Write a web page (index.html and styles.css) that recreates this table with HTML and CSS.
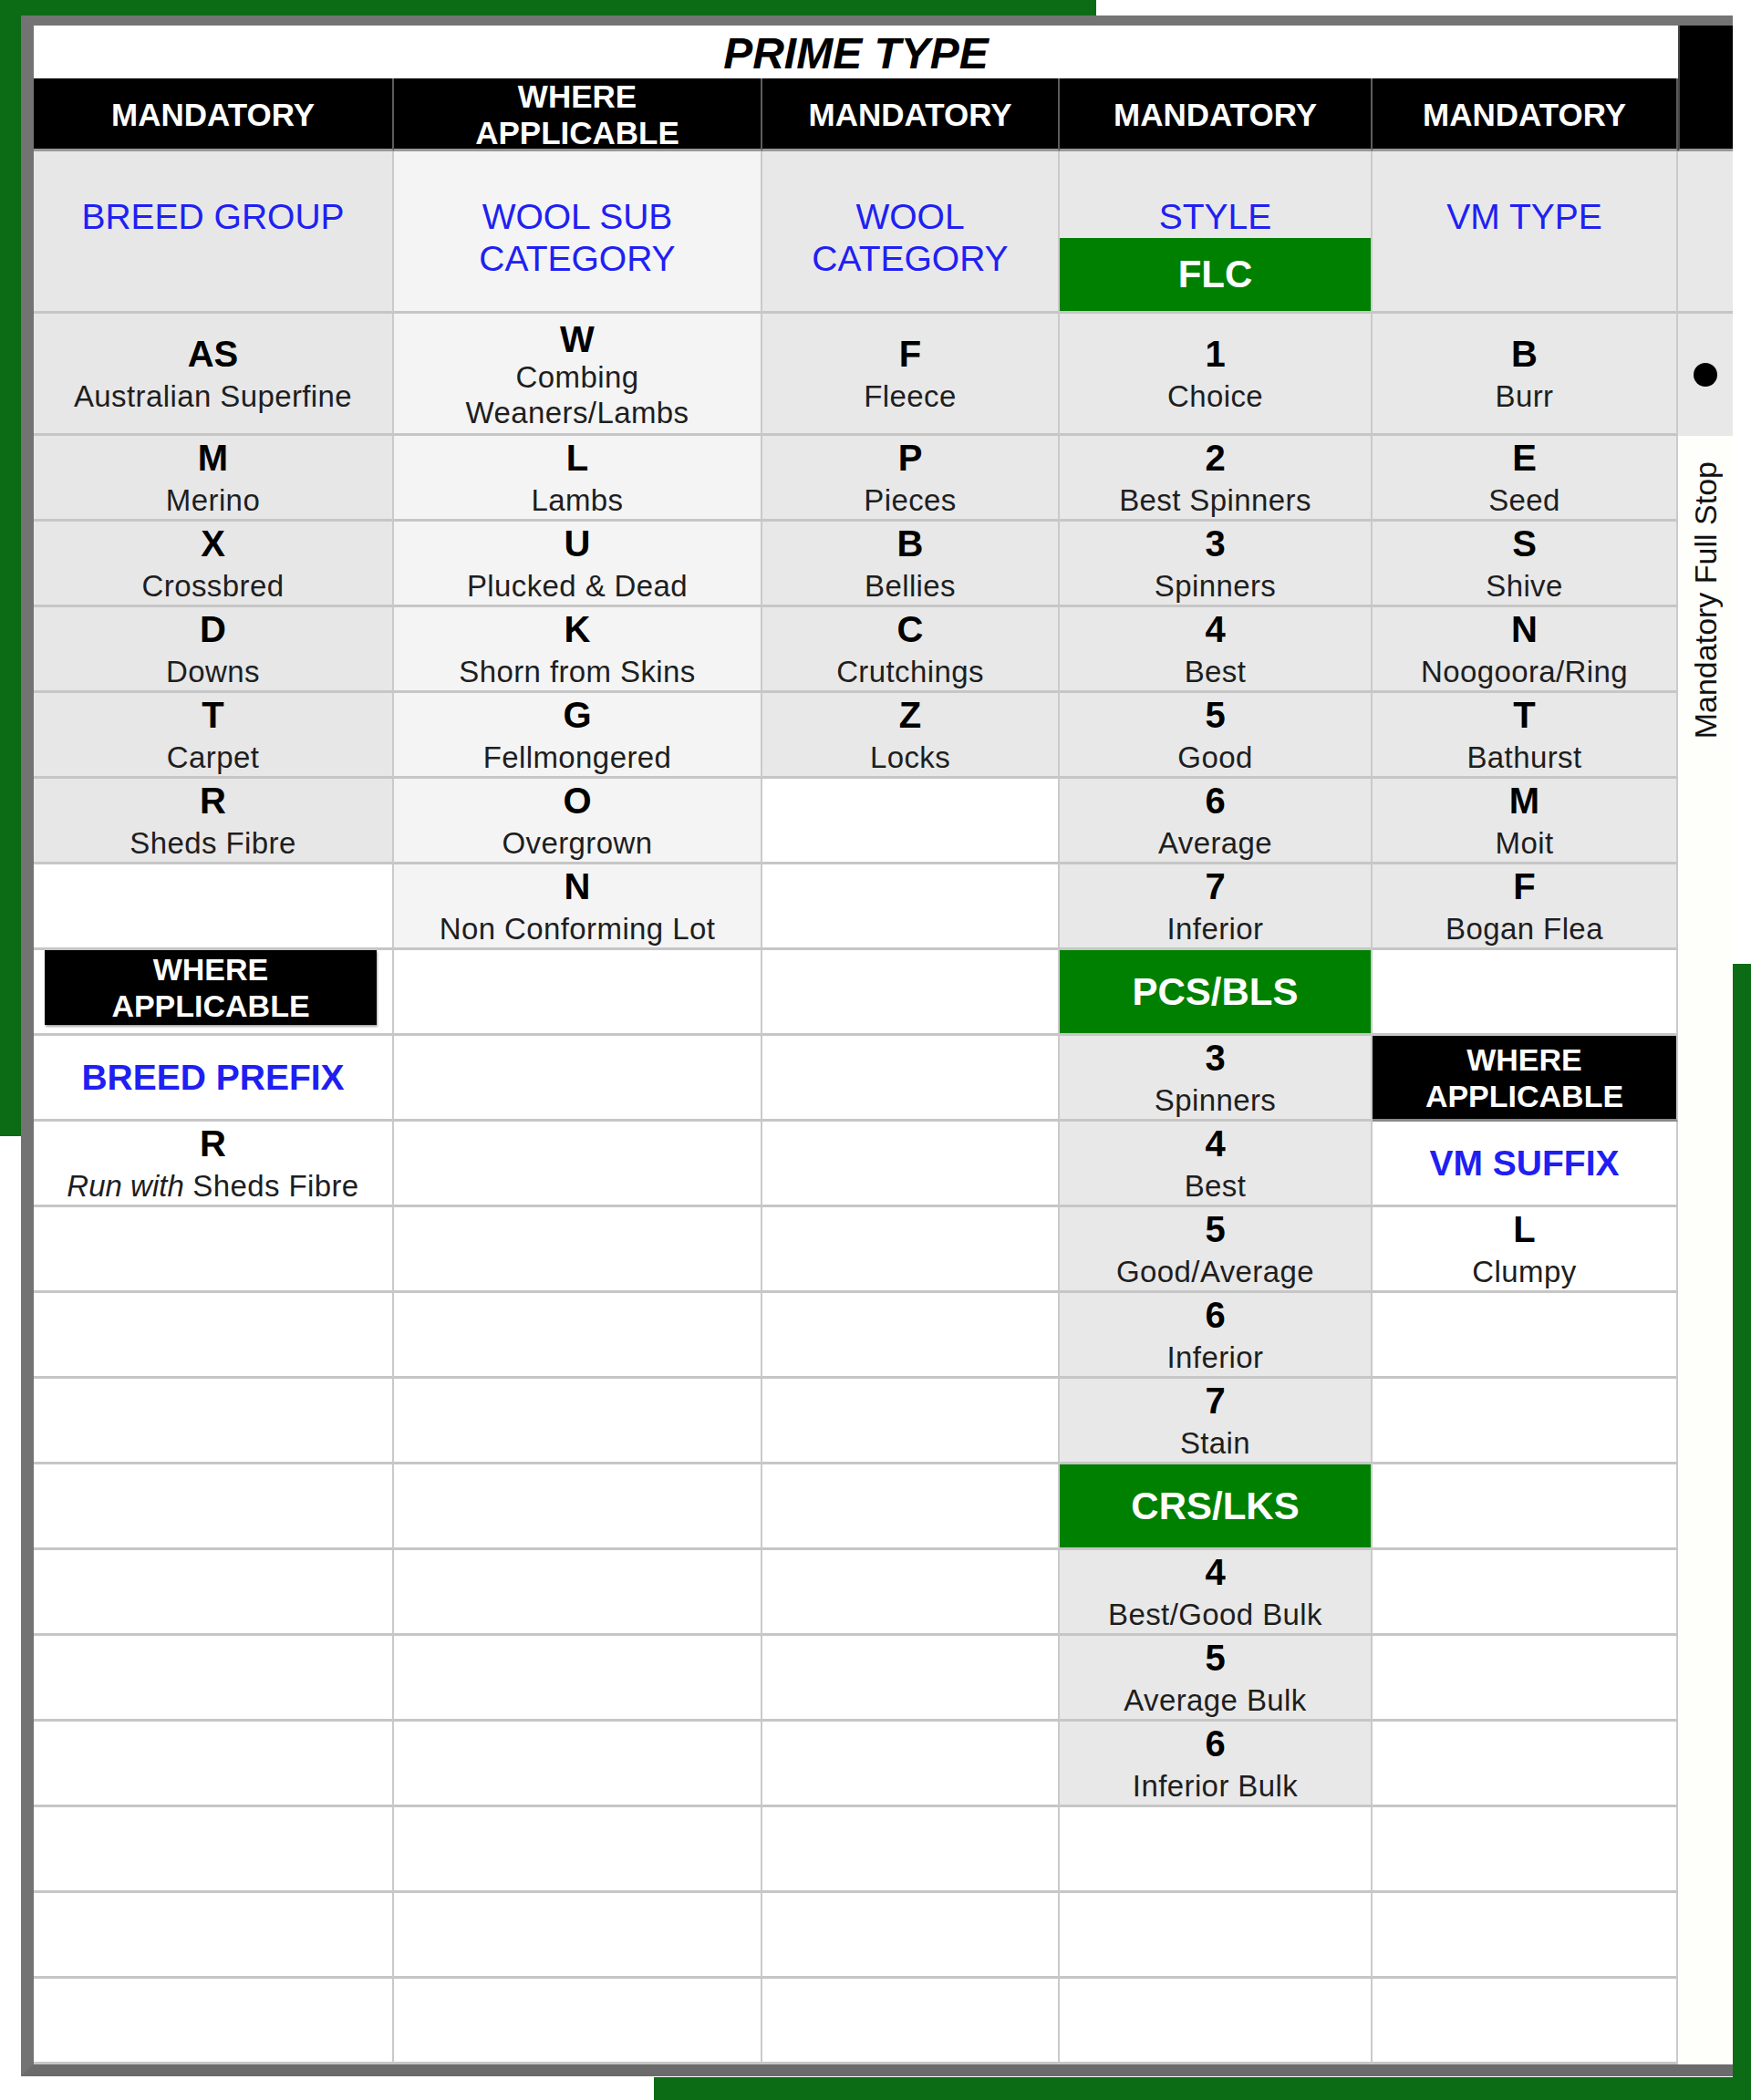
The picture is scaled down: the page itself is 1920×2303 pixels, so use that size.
FILE: index.html
```html
<!DOCTYPE html>
<html>
<head>
<meta charset="utf-8">
<title>Prime Type</title>
<link rel="stylesheet" href="styles.css">
</head>
<body>
<div class="frame">
  <div class="title">PRIME TYPE</div>
  <div class="side-top"></div>

  <div class="hd">MANDATORY</div>
  <div class="hd">WHERE<br>APPLICABLE</div>
  <div class="hd">MANDATORY</div>
  <div class="hd">MANDATORY</div>
  <div class="hd">MANDATORY</div>

  <div class="cat g1">BREED GROUP</div>
  <div class="cat g2">WOOL SUB<br>CATEGORY</div>
  <div class="cat g3">WOOL<br>CATEGORY</div>
  <div class="cat g3 style"><span>STYLE</span><span class="flc">FLC</span></div>
  <div class="cat g3">VM TYPE</div>
  <div class="cat g3 side"></div>

  <!-- row 1 -->
  <div class="cell g1"><b class="code">AS</b><span class="desc">Australian Superfine</span></div>
  <div class="cell g2"><b class="code">W</b><span class="desc tight">Combing<br>Weaners/Lambs</span></div>
  <div class="cell g3"><b class="code">F</b><span class="desc">Fleece</span></div>
  <div class="cell g3"><b class="code">1</b><span class="desc">Choice</span></div>
  <div class="cell g3"><b class="code">B</b><span class="desc">Burr</span></div>
  <div class="dot-cell"><span class="dot"></span></div>

  <div class="stop-cell"><span class="stop">Mandatory Full Stop</span></div>

  <!-- row 2 -->
  <div class="cell g1"><b class="code">M</b><span class="desc">Merino</span></div>
  <div class="cell g2"><b class="code">L</b><span class="desc">Lambs</span></div>
  <div class="cell g3"><b class="code">P</b><span class="desc">Pieces</span></div>
  <div class="cell g3"><b class="code">2</b><span class="desc">Best Spinners</span></div>
  <div class="cell g3"><b class="code">E</b><span class="desc">Seed</span></div>

  <!-- row 3 -->
  <div class="cell g1"><b class="code">X</b><span class="desc">Crossbred</span></div>
  <div class="cell g2"><b class="code">U</b><span class="desc">Plucked &amp; Dead</span></div>
  <div class="cell g3"><b class="code">B</b><span class="desc">Bellies</span></div>
  <div class="cell g3"><b class="code">3</b><span class="desc">Spinners</span></div>
  <div class="cell g3"><b class="code">S</b><span class="desc">Shive</span></div>

  <!-- row 4 -->
  <div class="cell g1"><b class="code">D</b><span class="desc">Downs</span></div>
  <div class="cell g2"><b class="code">K</b><span class="desc">Shorn from Skins</span></div>
  <div class="cell g3"><b class="code">C</b><span class="desc">Crutchings</span></div>
  <div class="cell g3"><b class="code">4</b><span class="desc">Best</span></div>
  <div class="cell g3"><b class="code">N</b><span class="desc">Noogoora/Ring</span></div>

  <!-- row 5 -->
  <div class="cell g1"><b class="code">T</b><span class="desc">Carpet</span></div>
  <div class="cell g2"><b class="code">G</b><span class="desc">Fellmongered</span></div>
  <div class="cell g3"><b class="code">Z</b><span class="desc">Locks</span></div>
  <div class="cell g3"><b class="code">5</b><span class="desc">Good</span></div>
  <div class="cell g3"><b class="code">T</b><span class="desc">Bathurst</span></div>

  <!-- row 6 -->
  <div class="cell g1"><b class="code">R</b><span class="desc">Sheds Fibre</span></div>
  <div class="cell g2"><b class="code">O</b><span class="desc">Overgrown</span></div>
  <div class="cell"></div>
  <div class="cell g3"><b class="code">6</b><span class="desc">Average</span></div>
  <div class="cell g3"><b class="code">M</b><span class="desc">Moit</span></div>

  <!-- row 7 -->
  <div class="cell"></div>
  <div class="cell g2"><b class="code">N</b><span class="desc">Non Conforming Lot</span></div>
  <div class="cell"></div>
  <div class="cell g3"><b class="code">7</b><span class="desc">Inferior</span></div>
  <div class="cell g3"><b class="code">F</b><span class="desc">Bogan Flea</span></div>

  <!-- row 8 -->
  <div class="cell boxed"><span class="wa-box">WHERE<br>APPLICABLE</span></div>
  <div class="cell"></div>
  <div class="cell"></div>
  <div class="cell green">PCS/BLS</div>
  <div class="cell"></div>

  <!-- row 9 -->
  <div class="cell blue-bold">BREED PREFIX</div>
  <div class="cell"></div>
  <div class="cell"></div>
  <div class="cell g3"><b class="code">3</b><span class="desc">Spinners</span></div>
  <div class="cell wa-cell">WHERE<br>APPLICABLE</div>

  <!-- row 10 -->
  <div class="cell"><b class="code">R</b><span class="desc"><i>Run with</i> Sheds Fibre</span></div>
  <div class="cell"></div>
  <div class="cell"></div>
  <div class="cell g3"><b class="code">4</b><span class="desc">Best</span></div>
  <div class="cell blue-bold">VM SUFFIX</div>

  <!-- row 11 -->
  <div class="cell"></div>
  <div class="cell"></div>
  <div class="cell"></div>
  <div class="cell g3"><b class="code">5</b><span class="desc">Good/Average</span></div>
  <div class="cell"><b class="code">L</b><span class="desc">Clumpy</span></div>

  <!-- row 12 -->
  <div class="cell"></div>
  <div class="cell"></div>
  <div class="cell"></div>
  <div class="cell g3"><b class="code">6</b><span class="desc">Inferior</span></div>
  <div class="cell"></div>

  <!-- row 13 -->
  <div class="cell"></div>
  <div class="cell"></div>
  <div class="cell"></div>
  <div class="cell g3"><b class="code">7</b><span class="desc">Stain</span></div>
  <div class="cell"></div>

  <!-- row 14 -->
  <div class="cell"></div>
  <div class="cell"></div>
  <div class="cell"></div>
  <div class="cell green">CRS/LKS</div>
  <div class="cell"></div>

  <!-- row 15 -->
  <div class="cell"></div>
  <div class="cell"></div>
  <div class="cell"></div>
  <div class="cell g3"><b class="code">4</b><span class="desc">Best/Good Bulk</span></div>
  <div class="cell"></div>

  <!-- row 16 -->
  <div class="cell"></div>
  <div class="cell"></div>
  <div class="cell"></div>
  <div class="cell g3"><b class="code">5</b><span class="desc">Average Bulk</span></div>
  <div class="cell"></div>

  <!-- row 17 -->
  <div class="cell"></div>
  <div class="cell"></div>
  <div class="cell"></div>
  <div class="cell g3"><b class="code">6</b><span class="desc">Inferior Bulk</span></div>
  <div class="cell"></div>

  <!-- row 18 -->
  <div class="cell"></div>
  <div class="cell"></div>
  <div class="cell"></div>
  <div class="cell"></div>
  <div class="cell"></div>

  <!-- row 19 -->
  <div class="cell"></div>
  <div class="cell"></div>
  <div class="cell"></div>
  <div class="cell"></div>
  <div class="cell"></div>

  <!-- row 20 -->
  <div class="cell"></div>
  <div class="cell"></div>
  <div class="cell"></div>
  <div class="cell"></div>
  <div class="cell"></div>
</div>
</body>
</html>
```

FILE: styles.css
```css
* { box-sizing: border-box; }

html, body { margin: 0; padding: 0; }

body {
  width: 1920px;
  height: 2303px;
  overflow: hidden;
  padding: 17px 0 0 23px;
  font-family: "Liberation Sans", Arial, sans-serif;
  background:
    linear-gradient(#0c6b15, #0c6b15) 0 0 / 1202px 18px no-repeat,
    linear-gradient(#0c6b15, #0c6b15) 0 0 / 23px 1246px no-repeat,
    linear-gradient(#0c6b15, #0c6b15) 1900px 1057px / 20px 1246px no-repeat,
    linear-gradient(#0c6b15, #0c6b15) 717px 2278px / 1203px 25px no-repeat,
    #ffffff;
}

.frame {
  width: 1877px;
  background: #ffffff;
  border-top: 11px solid #747474;
  border-left: 14px solid #737373;
  border-bottom: 13px solid #6b6b6b;
  display: grid;
  grid-template-columns: 395px 404px 326px 343px 335px 60px;
  grid-template-rows: 58px 80px 178px 134px repeat(19, 94px);
}

.title {
  grid-column: span 5;
  display: flex;
  align-items: center;
  justify-content: center;
  padding-top: 3px;
  font-size: 48px;
  font-weight: bold;
  font-style: italic;
  color: #000;
}

.side-top {
  grid-row: span 2;
  background: #000;
  border-left: 2px solid #444;
  border-bottom: 3px solid #999;
}

.hd {
  background: #000;
  color: #fff;
  font-weight: bold;
  font-size: 35px;
  line-height: 40px;
  text-align: center;
  display: flex;
  align-items: center;
  justify-content: center;
  padding-top: 3px;
  border-right: 2px solid #5c5c5c;
  border-bottom: 3px solid #999;
}

.cat {
  color: #2020f2;
  font-size: 39px;
  line-height: 46px;
  text-align: center;
  padding-top: 49px;
  border-right: 2px solid #cacaca;
  border-bottom: 3px solid #c6c6c6;
}

.cat.side { border-right: none; }

.style {
  display: flex;
  flex-direction: column;
  align-items: stretch;
}

.flc {
  margin-top: auto;
  height: 80px;
  background: #008000;
  color: #fff;
  font-weight: bold;
  font-size: 42px;
  display: flex;
  align-items: center;
  justify-content: center;
}

.g1 { background: #e7e7e7; }
.g2 { background: #f4f4f4; }
.g3 { background: #e8e8e8; }

.cell {
  display: flex;
  flex-direction: column;
  align-items: center;
  justify-content: center;
  text-align: center;
  padding-top: 3px;
  border-right: 2px solid #cacaca;
  border-bottom: 3px solid #c6c6c6;
}

.code {
  font-size: 40px;
  line-height: 44px;
  font-weight: bold;
  color: #000;
}

.desc {
  margin-top: 4px;
  font-size: 33px;
  line-height: 42px;
  letter-spacing: 0.4px;
  color: #1e1e1e;
  white-space: nowrap;
}

.desc.tight { line-height: 39px; margin-top: 0; }

.desc i { letter-spacing: 0; }

.green {
  background: #008000;
  color: #fff;
  font-weight: bold;
  font-size: 42px;
  padding-top: 0;
}

.blue-bold {
  color: #1f1ff2;
  font-weight: bold;
  font-size: 39px;
  padding-top: 0;
}

.boxed {
  align-items: stretch;
  justify-content: flex-start;
  padding: 0 17px 9px 12px;
}

.wa-box {
  flex: 1;
  background: #000;
  color: #fff;
  font-weight: bold;
  font-size: 34px;
  line-height: 40px;
  display: flex;
  align-items: center;
  justify-content: center;
  box-shadow: 1px 2px 2px rgba(0, 0, 0, 0.35);
}

.wa-cell {
  background: #000;
  color: #fff;
  font-weight: bold;
  font-size: 34px;
  line-height: 40px;
  padding-top: 0;
  border-bottom-color: #888;
}

.dot-cell {
  background: #e8e8e8;
  display: flex;
  align-items: center;
  justify-content: center;
}

.dot {
  width: 26px;
  height: 26px;
  border-radius: 50%;
  background: #000;
}

.stop-cell {
  grid-column: 6;
  grid-row: 5 / 24;
  background: #fefefb;
  display: flex;
  flex-direction: column;
  align-items: center;
}

.stop {
  margin-top: 28px;
  writing-mode: vertical-rl;
  transform: rotate(180deg);
  font-size: 34px;
  line-height: 38px;
  color: #111;
  white-space: nowrap;
}
```
